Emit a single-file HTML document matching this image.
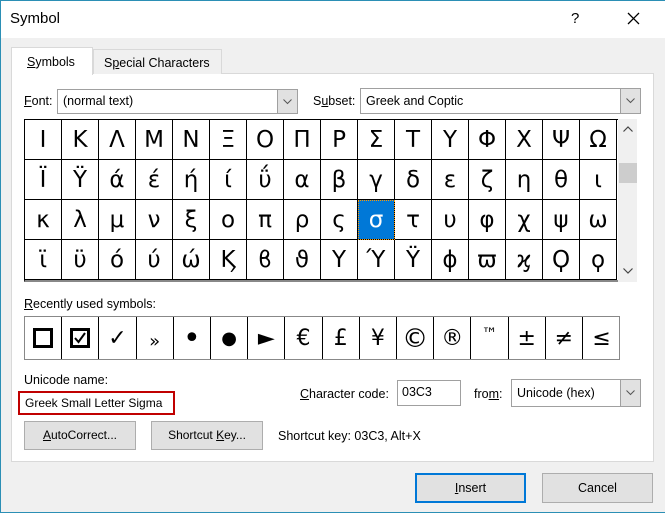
<!DOCTYPE html>
<html><head><style>
*{box-sizing:border-box;margin:0;padding:0}
body{width:665px;height:513px;position:relative;overflow:hidden;background:#f0f0f0;font-family:"Liberation Sans","DejaVu Sans",sans-serif;font-size:12px;color:#000}
.a{position:absolute}
u{text-decoration:underline}
.cell{position:absolute;width:37px;height:40px;border-right:1px solid #000;border-bottom:1px solid #000;text-align:center;font-family:"DejaVu Sans",sans-serif;font-size:23px;line-height:40px;background:#fff}
.rc{position:absolute;top:0;width:37.2px;height:42px;border-right:1px solid #000;text-align:center;font-family:"DejaVu Sans",sans-serif;font-size:22px;line-height:44px}
.btn{position:absolute;background:#e1e1e1;border:1px solid #adadad;text-align:center;line-height:27px;font-size:12px}
.dd{position:absolute;background:#fff;border:1px solid #a0a0a0;font-size:12.5px;padding-left:5px;line-height:22px}
.dd i{position:absolute;right:0;top:0;bottom:0;width:20px;background:#e1e1e1;border-left:1px solid #a0a0a0}
.dd i svg,.chev{position:absolute;left:5px;top:50%;margin-top:-3px}
</style></head><body>
<div class="a" style="left:0;top:0;width:665px;height:38px;background:#fff"></div>
<div class="a" style="left:0;top:0;width:1px;height:513px;background:#2b8fb5"></div>
<div class="a" style="left:0;top:0;width:665px;height:1px;background:#2b8fb5"></div>
<div class="a" style="left:0;top:512px;width:665px;height:1px;background:#2b8fb5"></div>
<div class="a" style="left:10px;top:10px;font-size:15px">Symbol</div>
<div class="a" style="left:571px;top:10px;font-size:15px">?</div>
<svg class="a" style="left:627px;top:12px" width="13" height="13"><path d="M1 1L12 12M12 1L1 12" stroke="#000" stroke-width="1.3"/></svg>

<div class="a" style="left:11px;top:73px;width:643px;height:389px;background:#fff;border:1px solid #d9d9d9"></div>
<div class="a" style="left:11px;top:47px;width:82px;height:28px;background:#fff;border:1px solid #d9d9d9;border-bottom:none;padding:7px 0 0 15px;font-size:12.5px"><u>S</u>ymbols</div>
<div class="a" style="left:93px;top:49px;width:129px;height:25px;background:#f0f0f0;border:1px solid #d9d9d9;border-bottom:none;padding:6px 0 0 10px;font-size:12.5px">S<u>p</u>ecial Characters</div>

<div class="a" style="left:24px;top:94px;font-size:12.5px"><u>F</u>ont:</div>
<div class="dd" style="left:57px;top:89px;width:241px;height:25px">(normal text)<i><svg width="9" height="6"><path d="M0.5 0.5L4.5 4.5L8.5 0.5" fill="none" stroke="#555"/></svg></i></div>
<div class="a" style="left:313px;top:94px;font-size:12.5px">S<u>u</u>bset:</div>
<div class="dd" style="left:360px;top:88px;width:281px;height:26px;line-height:24px">Greek and Coptic<i><svg width="9" height="6"><path d="M0.5 0.5L4.5 4.5L8.5 0.5" fill="none" stroke="#555"/></svg></i></div>

<div class="a" style="left:24px;top:119px;width:594px;height:163px;border-top:1px solid #000;border-left:1px solid #000;border-bottom:2px solid #888;background:#fff" id="g"></div>
<div class="a" style="left:618px;top:119px;width:19px;height:163px;background:#f0f0f0"></div>
<div class="a" style="left:619px;top:163px;width:18px;height:20px;background:#cdcdcd"></div>
<svg class="a" style="left:623px;top:126px" width="10" height="6"><path d="M0.5 5.5L5 1L9.5 5.5" fill="none" stroke="#444" stroke-width="1.2"/></svg>
<svg class="a" style="left:623px;top:268px" width="10" height="6"><path d="M0.5 0.5L5 5L9.5 0.5" fill="none" stroke="#444" stroke-width="1.2"/></svg>

<div class="a" style="left:24px;top:297px;font-size:12.5px"><u>R</u>ecently used symbols:</div>
<div class="a" style="left:24px;top:316px;width:596px;height:44px;border:1px solid #888;background:#fff" id="r"></div>

<div class="a" style="left:24px;top:373px;font-size:12.5px">Unicode name:</div>
<div class="a" style="left:18px;top:391px;width:157px;height:24px;border:2px solid #c00000;padding:3px 0 0 5px;font-size:12px">Greek Small Letter Sigma</div>
<div class="a" style="left:300px;top:387px;font-size:12.5px"><u>C</u>haracter code:</div>
<div class="a" style="left:397px;top:380px;width:64px;height:26px;background:#fff;border:1px solid #a0a0a0;padding:4px 0 0 4px;font-size:12.5px">03C3</div>
<div class="a" style="left:474px;top:387px;font-size:12.5px">fro<u>m</u>:</div>
<div class="dd" style="left:511px;top:379px;width:130px;height:28px;line-height:26px">Unicode (hex)<i><svg width="9" height="6"><path d="M0.5 0.5L4.5 4.5L8.5 0.5" fill="none" stroke="#555"/></svg></i></div>

<div class="btn" style="left:24px;top:421px;width:112px;height:29px"><u>A</u>utoCorrect...</div>
<div class="btn" style="left:151px;top:421px;width:112px;height:29px">Shortcut <u>K</u>ey...</div>
<div class="a" style="left:278px;top:429px;font-size:12.5px">Shortcut key: 03C3, Alt+X</div>

<div class="btn" style="left:415px;top:473px;width:111px;height:30px;border:2px solid #0078d7;line-height:26px;font-size:12.5px"><u>I</u>nsert</div>
<div class="btn" style="left:542px;top:473px;width:111px;height:30px;line-height:28px;font-size:12.5px">Cancel</div>

<script>
var rows=["ΙΚΛΜΝΞΟΠΡΣΤΥΦΧΨΩ","ΪΫάέήίΰαβγδεζηθι","κλμνξοπρςστυφχψω","ϊϋόύώϏϐϑΥΎΫϕϖϗϘϙ"];
var g=document.getElementById('g'),h='';
rows.forEach(function(r,ri){Array.from(r).forEach(function(c,ci){
var sel=(ri==2&&ci==9);
h+='<div class="cell" style="left:'+(ci*37)+'px;top:'+(ri*40)+'px;'+(sel?'background:#0078d7;color:#fff;outline:1px dotted #f90;outline-offset:-1px':'')+'">'+c+'</div>';});});
g.innerHTML=h;
var rs=["☐","☑","✓","»","•","●","►","€","£","¥","©","®","™","±","≠","≤"],rh='';
rs.forEach(function(c,i){var st='left:'+(i*37.2)+'px;',inner=c;
if(c=="☐")inner='<span style="display:inline-block;width:20px;height:20px;border:3px solid #000;margin-top:11px;vertical-align:top"></span>';
if(c=="☑")inner='<span style="display:inline-block;width:20px;height:20px;border:3px solid #000;margin-top:11px;vertical-align:top;position:relative"><svg style="position:absolute;left:1px;top:1px" width="12" height="12"><path d="M1 6L4.5 10L11 1" fill="none" stroke="#000" stroke-width="2"/></svg></span>';
if(c=="•")st+='font-size:30px;';if(c=="●")st+='font-size:18px;';
if(c=="™")st+='font-size:16px;line-height:34px;';if(c=="»")st+='font-size:18px;line-height:50px;';
if(c=="©")st+='font-size:26px;';
if(i==15)st+='border-right:none;';
rh+='<div class="rc" style="'+st+'">'+inner+'</div>';});
document.getElementById('r').innerHTML=rh;
</script>
</body></html>
